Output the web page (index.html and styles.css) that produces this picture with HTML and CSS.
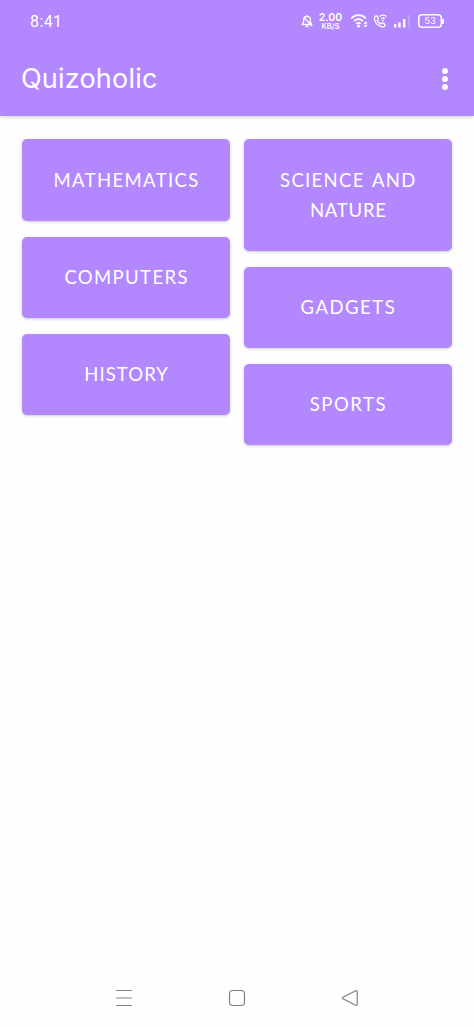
FILE: index.html
```html
<!DOCTYPE html>
<html lang="en">
<head>
<meta charset="utf-8">
<title>Quizoholic</title>
<link rel="stylesheet" href="styles.css">
</head>
<body>
<header class="app-header">
  <div class="status-bar">
    <span class="clock">8:41</span>
    <div class="status-icons">
      <svg class="bell" width="14" height="16" viewBox="0 0 14 16"><path d="M3 11.5H11.8L10.4 9.4V6.6C10.4 4.5 9 3.3 7 3.3S3.6 4.500 3.600 6.600V9.400L2.100 11.500H4M7 3.300V1.800M5.600 13.500H8.400M4.500 5L12 13" /></svg>
      <div class="net-speed"><span class="net-value">2.00</span><span class="net-unit">KB/S</span></div>
      <svg class="wifi" width="19" height="16" viewBox="0 0 19 16"><path d="M1.200 5.300C5.500 1 11.500 1 15.800 5.300M3.900 8.200C6.800 5.400 10.200 5.400 13.100 8.200M6.400 10.900C7.800 9.600 9.300 9.600 10.600 10.900"/><circle cx="8.500" cy="13" r="1.500"/><path class="thin" d="M14 10.300L15.500 8.700L17 10.300ZM14 12.300L15.500 13.900L17 12.300Z"/></svg>
      <svg class="call" width="15" height="16" viewBox="0 0 15 16"><path d="M2.500 3.100L4.200 3L5.500 5.900L4.200 7.400C4.900 9 6.200 10.200 7.800 11L9.300 9.700L12 11.200L11.700 13.200C10.900 14.300 8.900 14 7.200 13.200C4.500 12 2.300 9.600 1.600 6.900C1.200 5.300 1.500 4 2.500 3.100Z"/><path d="M6.500 3.600C8.800 1.700 11.300 1.700 13.600 3.600M8.300 5.700C9.500 4.800 10.700 4.800 11.900 5.700"/><circle cx="10.100" cy="7.600" r=".9"/></svg>
      <svg class="signal" width="18" height="16" viewBox="0 0 18 16"><path d="M1 11h2.400v3.500H1zM5.300 9.500h2.400v5H5.300zM10 6h2.400v8.500H10z"/><path class="dim" d="M15 2h2v12.500h-2z"/></svg>
      <div class="battery"><span class="battery-body">53</span><span class="battery-tip"></span></div>
    </div>
  </div>
  <div class="toolbar">
    <h1 class="title">Quizoholic</h1>
    <svg class="more" width="8" height="24" viewBox="0 0 8 24"><circle cx="4" cy="4" r="2.900"/><circle cx="4" cy="12" r="2.900"/><circle cx="4" cy="20" r="2.900"/></svg>
  </div>
</header>
<main class="categories">
  <div class="column">
    <button class="card"><span class="mathematics">MATHEMATICS</span></button>
    <button class="card"><span class="computers">COMPUTERS</span></button>
    <button class="card"><span class="history">HISTORY</span></button>
  </div>
  <div class="column">
    <button class="card"><span class="science">SCIENCE AND</span><span class="nature">NATURE</span></button>
    <button class="card"><span class="gadgets">GADGETS</span></button>
    <button class="card"><span class="sports">SPORTS</span></button>
  </div>
</main>
<nav class="nav-bar">
  <svg width="18" height="18" viewBox="0 0 18 18"><path d="M1 1.500H17M1 9H17M1 16.500H17"/></svg>
  <svg width="18" height="18" viewBox="0 0 18 18"><rect x="1.500" y="1.500" width="15" height="15" rx="3.500"/></svg>
  <svg width="18" height="18" viewBox="0 0 18 18"><path d="M2 8.200L14.700 1.700Q16.200 1.200 16.200 2.700V15.300Q16.200 16.800 14.700 16.300L2 9.800Q.8 9 2 8.200Z"/></svg>
</nav>
</body>
</html>
```

FILE: styles.css
```css
* { box-sizing: border-box; }
body {
  margin: 0;
  height: 1027px;
  display: flex;
  flex-direction: column;
  overflow: hidden;
  background: #fefefe;
  font-family: Lato, sans-serif;
}
svg { display: block; flex: none; }
.app-header {
  height: 116px;
  flex: none;
  background: #b388ff;
  color: #fff;
  box-shadow: 0 1px 4px rgba(0, 0, 0, .2);
}
.status-bar {
  height: 42px;
  padding: 0 30px;
  display: flex;
  align-items: center;
  justify-content: space-between;
}
.clock { font: 400 16px/20px Roboto, sans-serif; letter-spacing: .4px; padding-top: 1px; }
.status-icons { display: flex; align-items: center; }
.status-icons path { fill: none; stroke: #fff; stroke-width: 1.300; stroke-linejoin: round; }
.status-icons circle { fill: #fff; }
.net-speed {
  width: 24px;
  margin-left: 5px;
  display: flex;
  flex-direction: column;
  align-items: center;
  font-family: Inter, sans-serif;
}
.net-value { font-size: 10.500px; line-height: 10px; font-weight: 600; }
.net-unit { font-size: 7.500px; line-height: 7px; font-weight: 600; }
.wifi { margin-left: 7px; }
.status-icons .wifi path { stroke-width: 1.700; }
.status-icons .wifi .thin { stroke-width: .8; fill: #fff; }
.call { margin-left: 4px; }
.signal { margin-left: 5.500px; }
.status-icons .signal path { fill: #fff; stroke: none; }
.status-icons .signal .dim { opacity: .2; }
.battery { display: flex; align-items: center; margin-left: 7px; }
.battery-body {
  width: 24px;
  height: 14px;
  border-radius: 4px;
  box-shadow: inset 0 0 0 1.500px #fff;
  font: 400 9.500px/14px Inter, sans-serif;
  text-align: center;
}
.battery-tip { width: 2px; height: 5px; background: #fff; border-radius: 0 1px 1px 0; }
.toolbar {
  height: 74px;
  padding: 0 25px 0 21px;
  display: flex;
  align-items: center;
  justify-content: space-between;
}
.title { margin: 0; font: 400 27px/36px Inter, sans-serif; letter-spacing: .2px; }
.more { fill: #fff; }
.categories {
  flex: 1;
  padding: 23.400px 22px 0;
  display: flex;
  align-items: flex-start;
  gap: 13.500px;
}
.column { flex: 1; display: flex; flex-direction: column; gap: 15.900px; }
.card {
  border: 0;
  margin: 0;
  padding: 25.500px 0 25.800px;
  display: flex;
  flex-direction: column;
  align-items: center;
  border-radius: 5px;
  background: #b388ff;
  color: #fff;
  box-shadow: 0 1px 3px rgba(0, 0, 0, .2);
  font: 400 18.500px/30px Lato, sans-serif;
}
.card span { padding-left: 1px; white-space: nowrap; }
.mathematics, .computers { letter-spacing: 1.380px; }
.history { letter-spacing: 1.070px; }
.science { letter-spacing: 1.300px; word-spacing: 2px; }
.nature { letter-spacing: .8px; }
.gadgets, .sports { letter-spacing: 1.520px; }
.nav-bar {
  height: 58px;
  flex: none;
  padding: 0 115px;
  display: flex;
  align-items: center;
  justify-content: space-between;
}
.nav-bar svg { fill: none; stroke: #808080; stroke-width: 1.200; stroke-linejoin: round; }
```
